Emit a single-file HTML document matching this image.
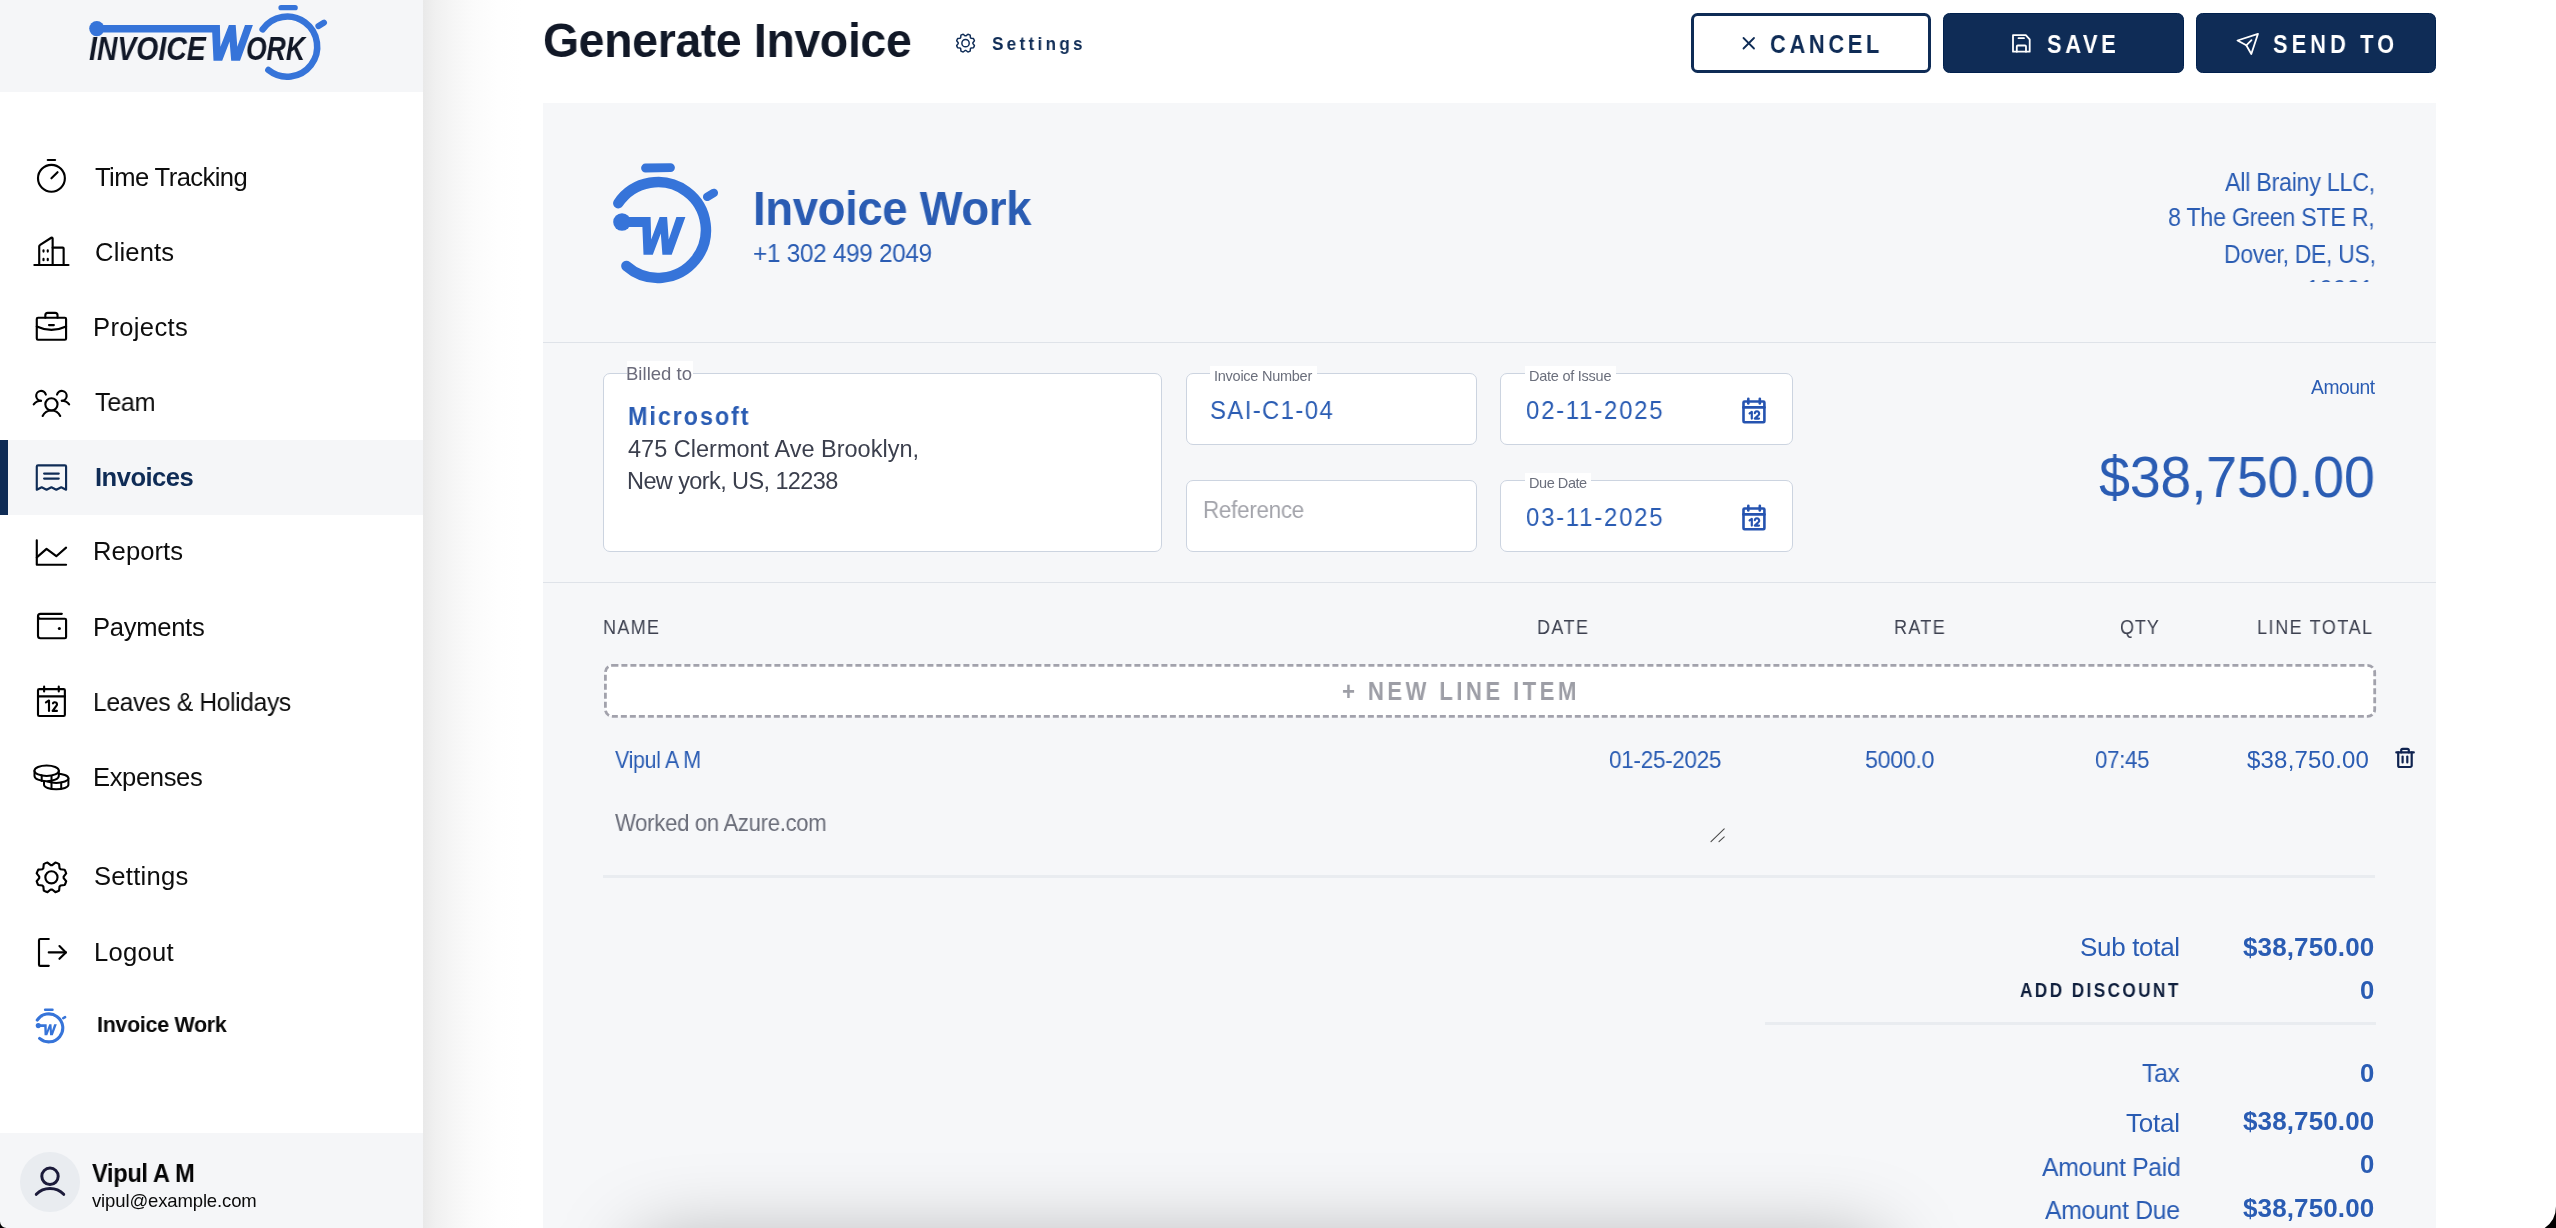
<!DOCTYPE html>
<html><head><meta charset="utf-8">
<style>
*{box-sizing:border-box;margin:0;padding:0}
html,body{width:2556px;height:1228px;overflow:hidden;background:#fff;font-family:"Liberation Sans",sans-serif}
.a{position:absolute}
.t{position:absolute;white-space:nowrap;will-change:transform}
.field{position:absolute;background:#fff;border:1.5px solid #ccd4e0;border-radius:7px}
.lbg{position:absolute;background:#fff}
</style></head>
<body>
<div id="root" style="position:relative;left:0;top:0;width:2556px;height:1228px;overflow:hidden;background:#fff">
<!-- sidebar -->
<div class="a" style="left:0;top:0;width:423px;height:92px;background:#f5f6f8"></div>
<svg class="a" style="left:0;top:0" width="423" height="92" viewBox="0 0 423 92">
 <circle cx="96.8" cy="28.6" r="7.6" fill="#3674d9"/>
 <path d="M96.8,25.06H219.9L220.4,46.8L228.9,25.06H235.7L237.3,46.8L245,25.06H252.9L240,60.8H231.2L229.6,41.5L222.2,60.8H213.5L212.2,32.5H96.8Z" fill="#3674d9"/>
 <path d="M262.65,29.4A30,30 0 1 1 268.4,70" fill="none" stroke="#3674d9" stroke-width="6.5" stroke-linecap="round"/>
 <line x1="281" y1="7.7" x2="295.2" y2="7.7" stroke="#3674d9" stroke-width="5.2" stroke-linecap="round"/>
 <line x1="318.4" y1="26.1" x2="324" y2="22.6" stroke="#3674d9" stroke-width="6" stroke-linecap="round"/>
</svg>
<div class="a" style="left:0;top:440px;width:423px;height:75px;background:#f5f6f8"></div>
<div class="a" style="left:0;top:440px;width:8px;height:75px;background:#0f2c56"></div>
<div class="a" style="left:0;top:1133px;width:423px;height:95px;background:#f5f6f8"></div>
<div class="a" style="left:20px;top:1152.4px;width:59.6px;height:59.6px;border-radius:50%;background:#e9ecf0"></div>
<div class="a" style="left:423px;top:0;width:100px;height:1228px;background:linear-gradient(90deg,#e9e9e9 0%,#f0f0f0 12%,#f6f6f6 30%,#fbfbfb 50%,#fefefe 75%,#ffffff 100%)"></div>

<svg class="a" style="left:0;top:0" width="423" height="1228" viewBox="0 0 423 1228">
 <g fill="none" stroke="#000" stroke-width="14" stroke-linecap="round" stroke-linejoin="round">
  <!-- timer -->
  <g transform="translate(31.9,157.6) scale(0.1526)">
   <circle cx="128" cy="136" r="88"/><line x1="128" y1="136" x2="168" y2="96"/><line x1="104" y1="16" x2="152" y2="16"/>
  </g>
  <!-- buildings -->
  <g transform="translate(31.9,233) scale(0.1526)">
   <line x1="16" y1="210" x2="240" y2="210"/>
   <path d="M136,210V36a6,6,0,0,0-9-5L54,78a10,10,0,0,0-6,9V210"/>
   <path d="M136,96H202a6,6,0,0,1,6,6V210"/>
   <line x1="76" y1="114" x2="76" y2="122"/><line x1="104" y1="114" x2="104" y2="122"/>
   <line x1="76" y1="170" x2="76" y2="178"/><line x1="104" y1="170" x2="104" y2="178"/>
  </g>
  <!-- briefcase -->
  <g transform="translate(31.9,308) scale(0.1526)">
   <rect x="32" y="64" width="192" height="144" rx="8"/>
   <path d="M88,64V48a16,16,0,0,1,16-16h48a16,16,0,0,1,16,16V64"/>
   <line x1="112" y1="112" x2="144" y2="112"/>
   <path d="M32,121Q128,166 224,121"/>
  </g>
  <!-- users three -->
  <g transform="translate(31.9,383) scale(0.1526)">
   <circle cx="128" cy="140" r="40"/>
   <path d="M196,116a59.8,59.8,0,0,1,48,24"/><path d="M12,140a59.8,59.8,0,0,1,48-24"/>
   <path d="M70.4,216a64.1,64.1,0,0,1,115.2,0"/>
   <path d="M60,116A32,32,0,1,1,91.1,76"/><path d="M164.9,76A32,32,0,1,1,196,116"/>
  </g>
  <!-- receipt -->
  <g transform="translate(31.9,458) scale(0.1526)" stroke="#0f2c56">
   <line x1="80" y1="102" x2="176" y2="102"/><line x1="80" y1="135" x2="176" y2="135"/>
   <path d="M32,208V56a8,8,0,0,1,8-8H216a8,8,0,0,1,8,8V208l-32-16-32,16-32-16L96,208,64,192Z"/>
  </g>
  <!-- chart -->
  <g transform="translate(31.9,533) scale(0.1526)">
   <polyline points="224 208 32 208 32 48"/><polyline points="224 96 160 152 96 104 32 160"/>
  </g>
  <!-- wallet -->
  <g transform="translate(31.9,606.5) scale(0.1526)">
   <path d="M40,64V192a16,16,0,0,0,16,16H216a8,8,0,0,0,8-8V88a8,8,0,0,0-8-8H56A16,16,0,0,1,40,64Z"/>
   <path d="M40,64A16,16,0,0,1,56,48H196"/>
   <circle cx="180" cy="144" r="10" fill="#000" stroke="none"/>
  </g>
  <!-- calendar -->
  <g transform="translate(31.9,683) scale(0.1526)">
   <rect x="40" y="40" width="176" height="176" rx="8"/>
   <line x1="176" y1="24" x2="176" y2="56"/><line x1="80" y1="24" x2="80" y2="56"/><line x1="40" y1="88" x2="216" y2="88"/>
   <path d="M92,126.94l20-12v68"/>
   <path d="M138.14,133.33A14,14,0,1,1,160,150.29L136,182.94h28"/>
  </g>
  <!-- coins -->
  <g stroke-width="2">
   <path d="M44,778.3V784.7A12.2,4.6 0 0 0 68.4,784.7V778.3" fill="#fff"/>
   <ellipse cx="56.2" cy="778.3" rx="12.2" ry="4.6" fill="#fff"/>
   <line x1="51.5" y1="783" x2="51.5" y2="789"/><line x1="61.2" y1="782.5" x2="61.2" y2="788.5"/>
   <path d="M34.5,770.7V776A12.15,5.2 0 0 0 58.8,776V770.7" fill="#fff"/>
   <ellipse cx="46.65" cy="770.7" rx="12.15" ry="5.2" fill="#fff"/>
   <line x1="41.7" y1="775.2" x2="41.7" y2="781"/><line x1="51.5" y1="775.9" x2="51.5" y2="781.3"/>
  </g>
  <!-- gear -->
  <g transform="translate(31.9,857.8) scale(0.1526)">
   <circle cx="128" cy="128" r="40"/>
   <path d="M41.43,178.09A99.14,99.14,0,0,1,31.36,153.8l16.78-21a81.59,81.59,0,0,1,0-9.64l-16.77-21a99.43,99.43,0,0,1,10.05-24.3l26.71-3a81,81,0,0,1,6.81-6.81l3-26.7A99.14,99.14,0,0,1,102.2,31.36l21,16.78a81.59,81.59,0,0,1,9.64,0l21-16.77a99.43,99.43,0,0,1,24.3,10.05l3,26.71a81,81,0,0,1,6.81,6.81l26.7,3a99.14,99.14,0,0,1,10.07,24.29l-16.78,21a81.59,81.59,0,0,1,0,9.640l16.77,21a99.43,99.43,0,0,1-10,24.3l-26.71,3a81,81,0,0,1-6.81,6.81l-3,26.7a99.14,99.14,0,0,1-24.3,10.07l-21-16.78a81.59,81.59,0,0,1-9.64,0l-21,16.77a99.43,99.43,0,0,1-24.3-10l-3-26.71a81,81,0,0,1-6.81-6.81Z"/>
  </g>
  <!-- sign out -->
  <g transform="translate(32.9,932.9) scale(0.1526)">
   <polyline points="174 86 216 128 174 170"/><line x1="104" y1="128" x2="216" y2="128"/>
   <path d="M104,216H48a8,8,0,0,1-8-8V48a8,8,0,0,1,8-8h56"/>
  </g>
 </g>
 <!-- avatar user -->
 <g fill="none" stroke="#1c1b3a" stroke-width="3" stroke-linecap="round">
  <circle cx="50" cy="1176.3" r="8.2"/>
  <path d="M36.3,1194.3A19,19 0 0 1 63.7,1194.3"/>
 </g>
 <!-- small logo -->
 <g transform="translate(48.8,1027.9) scale(0.292)">
  <use href="#logo"/>
 </g>
</svg>

<!-- main header icons -->
<svg class="a" style="left:0;top:0" width="2556" height="103" viewBox="0 0 2556 103">
 <g transform="translate(953.8,31.4) scale(0.0918)" fill="none" stroke="#0f2c56" stroke-width="16" stroke-linecap="round" stroke-linejoin="round">
   <circle cx="128" cy="128" r="40"/>
   <path d="M41.43,178.09A99.14,99.14,0,0,1,31.36,153.8l16.78-21a81.59,81.59,0,0,1,0-9.64l-16.77-21a99.43,99.43,0,0,1,10.05-24.3l26.71-3a81,81,0,0,1,6.81-6.81l3-26.7A99.14,99.14,0,0,1,102.2,31.36l21,16.78a81.59,81.59,0,0,1,9.64,0l21-16.77a99.43,99.43,0,0,1,24.3,10.05l3,26.71a81,81,0,0,1,6.81,6.81l26.7,3a99.14,99.14,0,0,1,10.07,24.290l-16.78,21a81.59,81.59,0,0,1,0,9.64l16.77,21a99.43,99.43,0,0,1-10,24.3l-26.71,3a81,81,0,0,1-6.81,6.81l-3,26.7a99.14,99.14,0,0,1-24.3,10.07l-21-16.78a81.59,81.59,0,0,1-9.64,0l-21,16.77a99.43,99.43,0,0,1-24.3-10l-3-26.71a81,81,0,0,1-6.81-6.81Z"/>
 </g>
 <rect x="1692.5" y="14.5" width="237" height="57" rx="5" fill="#fff" stroke="#0f2c56" stroke-width="3"/>
 <rect x="1943.5" y="13.5" width="240" height="59" rx="6" fill="#0f2c56" stroke="#00204d" stroke-width="1"/>
 <rect x="2196.5" y="13.5" width="239" height="59" rx="6" fill="#0f2c56" stroke="#00204d" stroke-width="1"/>
 <g stroke="#0f2c56" stroke-width="1.8" stroke-linecap="round"><line x1="1743.5" y1="38" x2="1754" y2="48.5"/><line x1="1754" y1="38" x2="1743.5" y2="48.5"/></g>
 <g fill="none" stroke="#fff" stroke-width="1.8" stroke-linejoin="round" stroke-linecap="round">
  <path d="M2013,35.2H2025.8L2029.7,39.4V51.7H2013Z"/>
  <line x1="2018.5" y1="38.2" x2="2024" y2="38.2"/>
  <path d="M2016.8,51.7V46.5a1,1,0,0,1,1-1H2025a1,1,0,0,1,1,1V51.7"/>
  <path d="M2237.5,40.5L2258,33.8L2251.3,54L2246.3,45.3Z"/>
  <line x1="2246.3" y1="45.3" x2="2251.5" y2="40.2"/>
 </g>
</svg>

<!-- card -->
<div class="a" style="left:543px;top:103px;width:1893px;height:1125px;background:#f6f7f9"></div>
<div class="a" style="left:543px;top:342px;width:1893px;height:1px;background:#dfe3e9"></div>
<div class="a" style="left:543px;top:582px;width:1893px;height:1px;background:#dfe3e9"></div>

<svg class="a" style="left:0;top:0" width="2556" height="1228" viewBox="0 0 2556 1228">
 <defs>
  <g id="logo">
   <path d="M-39.66,-26.86A47.9,47.9 0 1 1 -31.6,36" fill="none" stroke="#3674d9" stroke-width="10.5" stroke-linecap="round"/>
   <line x1="-12.5" y1="-62" x2="12.5" y2="-62.4" stroke="#3674d9" stroke-width="8.8" stroke-linecap="round"/>
   <line x1="49.2" y1="-33.2" x2="55.8" y2="-37.1" stroke="#3674d9" stroke-width="8.5" stroke-linecap="round"/>
   <circle cx="-36" cy="-8" r="8.8" fill="#3674d9"/>
   <path d="M-36,-12.9H-7.4L-6.8,9.6L1.6,-12.9H9.1L10.7,9.6L18.4,-12.9H27.4L13.7,24.8H4.4L2.8,3.6L-5.2,24.8H-14.5L-15.6,-3H-36Z" fill="#3674d9"/>
  </g>
 </defs>
 <g transform="translate(658,230)"><use href="#logo"/></g>
</svg>

<!-- fields -->
<div class="field" style="left:602.7px;top:372.6px;width:559.5px;height:179px"></div>
<div class="lbg" style="left:626.8px;top:361.2px;width:66.1px;height:14px;background:#fff"></div>
<div class="field" style="left:1185.7px;top:372.6px;width:291px;height:72.4px"></div>
<div class="lbg" style="left:1210px;top:365.5px;width:107px;height:10px"></div>
<div class="field" style="left:1500.4px;top:372.6px;width:292.5px;height:72.4px"></div>
<div class="lbg" style="left:1525px;top:365.5px;width:91px;height:10px"></div>
<div class="field" style="left:1185.7px;top:479.5px;width:291px;height:72.2px"></div>
<div class="field" style="left:1500.4px;top:479.5px;width:292.5px;height:72.2px"></div>
<div class="lbg" style="left:1525px;top:472.5px;width:66px;height:10px"></div>

<svg class="a" style="left:0;top:0" width="2556" height="1228" viewBox="0 0 2556 1228">
 <g id="cal" fill="none" stroke="#2553b0" stroke-width="2.6" stroke-linejoin="round" stroke-linecap="round">
  <rect x="1743.5" y="401.5" width="20.9" height="20.8" rx="1"/>
  <line x1="1748.3" y1="398.8" x2="1748.3" y2="403.5"/><line x1="1759.8" y1="398.8" x2="1759.8" y2="403.5"/>
  <line x1="1743.5" y1="407.4" x2="1764.4" y2="407.4"/>
  <path d="M1749.6,413.3L1751.8,411.8V418.6" stroke-width="2.2"/>
  <path d="M1754.8,413.2A2.2,2.2 0 1 1 1758.6,415L1754.8,418.6H1759" stroke-width="2.2"/>
 </g>
 <use href="#cal" transform="translate(0,107)"/>
 <!-- dashed new line box -->
 <rect x="605.4" y="665.4" width="1769.3" height="51" rx="7" fill="#fff" stroke="#a2a2ac" stroke-width="2.8" stroke-dasharray="6 3"/>
 <!-- trash -->
 <g fill="none" stroke="#0f2350" stroke-width="2.2" stroke-linecap="round" stroke-linejoin="round">
  <line x1="2396.3" y1="752.4" x2="2413.8" y2="752.4"/>
  <path d="M2401.2,752.4V750.3a1.5,1.5 0 0 1 1.5-1.5H2407.3a1.5,1.5 0 0 1 1.5,1.5V752.4"/>
  <path d="M2398.2,752.4V765.5a1.5,1.5 0 0 0 1.5,1.5H2410.2a1.5,1.5 0 0 0 1.5-1.5V752.4"/>
  <line x1="2402.6" y1="756.5" x2="2402.6" y2="762.5"/><line x1="2407.3" y1="756.5" x2="2407.3" y2="762.5"/>
 </g>
 <!-- resize -->
 <g stroke="#4a4a4a" stroke-width="1.1" stroke-linecap="round">
  <line x1="1711" y1="841.6" x2="1724.2" y2="828.8"/><line x1="1719" y1="841.6" x2="1724.2" y2="836.9"/>
 </g>
</svg>
<div class="a" style="left:603px;top:874.5px;width:1772px;height:3px;background:#e9ecf0"></div>
<div class="a" style="left:1765px;top:1021.5px;width:1611px;height:3px;background:#e9ecf0;width:611px"></div>

<!-- clipped address 4th line -->
<div class="a" style="left:2200px;top:270px;width:180px;height:12px;overflow:hidden">
 <div class="t" style="right:6.4px;top:6.4px;font-size:26px;line-height:26px;color:#2a5cb3;transform:scaleX(0.93);transform-origin:100% 0">19901</div>
</div>

<div class="t" style="left:89.40px;top:33.06px;font-size:32.3px;line-height:32.3px;font-weight:700;font-style:italic;color:#111827;letter-spacing:0.000px;transform:scaleX(0.8789);transform-origin:0 0;">INVOICE</div>
<div class="t" style="left:246.28px;top:33.06px;font-size:32.3px;line-height:32.3px;font-weight:700;font-style:italic;color:#111827;letter-spacing:0.000px;transform:scaleX(0.8224);transform-origin:0 0;">ORK</div>
<div class="t" style="left:95.10px;top:164.53px;font-size:25.6px;line-height:25.6px;font-weight:400;font-style:normal;color:#0d0d0d;letter-spacing:-0.591px;">Time Tracking</div>
<div class="t" style="left:94.70px;top:239.73px;font-size:25.6px;line-height:25.6px;font-weight:400;font-style:normal;color:#0d0d0d;letter-spacing:0.144px;">Clients</div>
<div class="t" style="left:93.10px;top:314.73px;font-size:25.6px;line-height:25.6px;font-weight:400;font-style:normal;color:#0d0d0d;letter-spacing:0.335px;">Projects</div>
<div class="t" style="left:95.10px;top:390.23px;font-size:25.6px;line-height:25.6px;font-weight:400;font-style:normal;color:#0d0d0d;letter-spacing:-0.350px;transform:scaleX(0.9832);transform-origin:0 0;">Team</div>
<div class="t" style="left:94.90px;top:465.03px;font-size:25.6px;line-height:25.6px;font-weight:700;font-style:normal;color:#0f2c56;letter-spacing:-0.527px;">Invoices</div>
<div class="t" style="left:93.10px;top:539.33px;font-size:25.6px;line-height:25.6px;font-weight:400;font-style:normal;color:#0d0d0d;letter-spacing:0.080px;">Reports</div>
<div class="t" style="left:93.10px;top:614.73px;font-size:25.6px;line-height:25.6px;font-weight:400;font-style:normal;color:#0d0d0d;letter-spacing:-0.300px;">Payments</div>
<div class="t" style="left:93.18px;top:690.23px;font-size:25.6px;line-height:25.6px;font-weight:400;font-style:normal;color:#0d0d0d;letter-spacing:-0.350px;transform:scaleX(0.9603);transform-origin:0 0;">Leaves &amp; Holidays</div>
<div class="t" style="left:93.10px;top:765.03px;font-size:25.6px;line-height:25.6px;font-weight:400;font-style:normal;color:#0d0d0d;letter-spacing:-0.386px;">Expenses</div>
<div class="t" style="left:94.10px;top:864.03px;font-size:25.6px;line-height:25.6px;font-weight:400;font-style:normal;color:#0d0d0d;letter-spacing:0.260px;">Settings</div>
<div class="t" style="left:93.60px;top:939.63px;font-size:25.6px;line-height:25.6px;font-weight:400;font-style:normal;color:#0d0d0d;letter-spacing:0.266px;">Logout</div>
<div class="t" style="left:97.34px;top:1013.55px;font-size:22.5px;line-height:22.5px;font-weight:700;font-style:normal;color:#0a0a0a;letter-spacing:-0.350px;transform:scaleX(0.9559);transform-origin:0 0;">Invoice Work</div>
<div class="t" style="left:92.10px;top:1161.04px;font-size:25px;line-height:25px;font-weight:700;font-style:normal;color:#050505;letter-spacing:-0.350px;transform:scaleX(0.9444);transform-origin:0 0;">Vipul A M</div>
<div class="t" style="left:92.10px;top:1191.94px;font-size:18.5px;line-height:18.5px;font-weight:400;font-style:normal;color:#0a0a0a;letter-spacing:-0.133px;">vipul@example.com</div>
<div class="t" style="left:542.84px;top:16.34px;font-size:48.5px;line-height:48.5px;font-weight:700;font-style:normal;color:#111827;letter-spacing:-0.350px;transform:scaleX(0.9561);transform-origin:0 0;">Generate Invoice</div>
<div class="t" style="left:992.00px;top:34.32px;font-size:19px;line-height:19px;font-weight:700;font-style:normal;color:#0f2c56;letter-spacing:3.659px;transform:scaleX(0.9000);transform-origin:0 0;">Settings</div>
<div class="t" style="left:1769.56px;top:30.69px;font-size:26px;line-height:26px;font-weight:700;font-style:normal;color:#0f2c56;letter-spacing:4.368px;transform:scaleX(0.8400);transform-origin:0 0;">CANCEL</div>
<div class="t" style="left:2047.30px;top:30.69px;font-size:26px;line-height:26px;font-weight:700;font-style:normal;color:#ffffff;letter-spacing:4.299px;transform:scaleX(0.8400);transform-origin:0 0;">SAVE</div>
<div class="t" style="left:2273.40px;top:30.69px;font-size:26px;line-height:26px;font-weight:700;font-style:normal;color:#ffffff;letter-spacing:4.843px;transform:scaleX(0.8400);transform-origin:0 0;">SEND TO</div>
<div class="t" style="left:752.96px;top:184.67px;font-size:48px;line-height:48px;font-weight:700;font-style:normal;color:#2a5cb3;letter-spacing:-0.350px;transform:scaleX(0.9471);transform-origin:0 0;">Invoice Work</div>
<div class="t" style="left:753.02px;top:241.04px;font-size:25px;line-height:25px;font-weight:400;font-style:normal;color:#2a5cb3;letter-spacing:-0.350px;transform:scaleX(0.9765);transform-origin:0 0;">+1 302 499 2049</div>
<div class="t" style="left:2225.40px;top:168.59px;font-size:26px;line-height:26px;font-weight:400;font-style:normal;color:#2a5cb3;letter-spacing:-0.350px;transform:scaleX(0.8991);transform-origin:0 0;">All Brainy LLC,</div>
<div class="t" style="left:2168.40px;top:204.39px;font-size:26px;line-height:26px;font-weight:400;font-style:normal;color:#2a5cb3;letter-spacing:-0.350px;transform:scaleX(0.8968);transform-origin:0 0;">8 The Green STE R,</div>
<div class="t" style="left:2223.63px;top:240.79px;font-size:26px;line-height:26px;font-weight:400;font-style:normal;color:#2a5cb3;letter-spacing:-0.350px;transform:scaleX(0.8848);transform-origin:0 0;">Dover, DE, US,</div>
<div class="t" style="left:626.30px;top:365.44px;font-size:18.5px;line-height:18.5px;font-weight:400;font-style:normal;color:#6b6b7b;letter-spacing:0.022px;">Billed to</div>
<div class="t" style="left:627.58px;top:403.90px;font-size:25.4px;line-height:25.4px;font-weight:700;font-style:normal;color:#2a5cb3;letter-spacing:2.093px;transform:scaleX(0.9200);transform-origin:0 0;">Microsoft</div>
<div class="t" style="left:628.00px;top:438.11px;font-size:23.5px;line-height:23.5px;font-weight:400;font-style:normal;color:#3b3f4d;letter-spacing:0.007px;">475 Clermont Ave Brooklyn,</div>
<div class="t" style="left:627.00px;top:469.71px;font-size:23.5px;line-height:23.5px;font-weight:400;font-style:normal;color:#3b3f4d;letter-spacing:-0.593px;">New york, US, 12238</div>
<div class="t" style="left:1213.60px;top:369.43px;font-size:14.5px;line-height:14.5px;font-weight:400;font-style:normal;color:#6b6f7c;letter-spacing:-0.255px;">Invoice Number</div>
<div class="t" style="left:1528.80px;top:369.43px;font-size:14.5px;line-height:14.5px;font-weight:400;font-style:normal;color:#6b6f7c;letter-spacing:-0.248px;">Date of Issue</div>
<div class="t" style="left:1528.80px;top:476.33px;font-size:14.5px;line-height:14.5px;font-weight:400;font-style:normal;color:#6b6f7c;letter-spacing:-0.442px;">Due Date</div>
<div class="t" style="left:1210.38px;top:396.59px;font-size:26px;line-height:26px;font-weight:400;font-style:normal;color:#2a5cb3;letter-spacing:1.505px;transform:scaleX(0.9200);transform-origin:0 0;">SAI-C1-04</div>
<div class="t" style="left:1525.88px;top:396.59px;font-size:26px;line-height:26px;font-weight:400;font-style:normal;color:#2a5cb3;letter-spacing:1.928px;transform:scaleX(0.9200);transform-origin:0 0;">02-11-2025</div>
<div class="t" style="left:1525.88px;top:503.69px;font-size:26px;line-height:26px;font-weight:400;font-style:normal;color:#2a5cb3;letter-spacing:1.928px;transform:scaleX(0.9200);transform-origin:0 0;">03-11-2025</div>
<div class="t" style="left:1203.34px;top:499.01px;font-size:23.5px;line-height:23.5px;font-weight:400;font-style:normal;color:#a3a4ab;letter-spacing:-0.350px;transform:scaleX(0.9584);transform-origin:0 0;">Reference</div>
<div class="t" style="left:2310.80px;top:377.66px;font-size:19.3px;line-height:19.3px;font-weight:400;font-style:normal;color:#2a5cb3;letter-spacing:-0.478px;">Amount</div>
<div class="t" style="left:2099.00px;top:449.33px;font-size:57.5px;line-height:57.5px;font-weight:400;font-style:normal;color:#2a5cb3;letter-spacing:-0.350px;transform:scaleX(0.9690);transform-origin:0 0;">$38,750.00</div>
<div class="t" style="left:603.40px;top:616.87px;font-size:20px;line-height:20px;font-weight:400;font-style:normal;color:#3d4150;letter-spacing:1.445px;transform:scaleX(0.9000);transform-origin:0 0;">NAME</div>
<div class="t" style="left:1536.50px;top:616.87px;font-size:20px;line-height:20px;font-weight:400;font-style:normal;color:#3d4150;letter-spacing:1.569px;transform:scaleX(0.9000);transform-origin:0 0;">DATE</div>
<div class="t" style="left:1893.60px;top:616.87px;font-size:20px;line-height:20px;font-weight:400;font-style:normal;color:#3d4150;letter-spacing:1.495px;transform:scaleX(0.9000);transform-origin:0 0;">RATE</div>
<div class="t" style="left:2119.70px;top:616.87px;font-size:20px;line-height:20px;font-weight:400;font-style:normal;color:#3d4150;letter-spacing:1.002px;transform:scaleX(0.9000);transform-origin:0 0;">QTY</div>
<div class="t" style="left:2257.10px;top:616.87px;font-size:20px;line-height:20px;font-weight:400;font-style:normal;color:#3d4150;letter-spacing:1.746px;transform:scaleX(0.9000);transform-origin:0 0;">LINE TOTAL</div>
<div class="t" style="left:1342.15px;top:678.39px;font-size:26px;line-height:26px;font-weight:700;font-style:normal;color:#9d9ea6;letter-spacing:4.054px;transform:scaleX(0.8500);transform-origin:0 0;">+ NEW LINE ITEM</div>
<div class="t" style="left:614.90px;top:747.68px;font-size:24px;line-height:24px;font-weight:400;font-style:normal;color:#2a5cb3;letter-spacing:-0.350px;transform:scaleX(0.8895);transform-origin:0 0;">Vipul A M</div>
<div class="t" style="left:1608.50px;top:747.68px;font-size:24px;line-height:24px;font-weight:400;font-style:normal;color:#2a5cb3;letter-spacing:-0.350px;transform:scaleX(0.9399);transform-origin:0 0;">01-25-2025</div>
<div class="t" style="left:1865.40px;top:747.68px;font-size:24px;line-height:24px;font-weight:400;font-style:normal;color:#2a5cb3;letter-spacing:-0.350px;transform:scaleX(0.9704);transform-origin:0 0;">5000.0</div>
<div class="t" style="left:2094.60px;top:747.68px;font-size:24px;line-height:24px;font-weight:400;font-style:normal;color:#2a5cb3;letter-spacing:-0.350px;transform:scaleX(0.9295);transform-origin:0 0;">07:45</div>
<div class="t" style="left:2246.80px;top:747.68px;font-size:24px;line-height:24px;font-weight:400;font-style:normal;color:#2a5cb3;letter-spacing:0.203px;">$38,750.00</div>
<div class="t" style="left:615.00px;top:810.98px;font-size:24px;line-height:24px;font-weight:400;font-style:normal;color:#6b6e7a;letter-spacing:-0.350px;transform:scaleX(0.9230);transform-origin:0 0;">Worked on Azure.com</div>
<div class="t" style="left:2079.90px;top:933.59px;font-size:26px;line-height:26px;font-weight:400;font-style:normal;color:#2a5cb3;letter-spacing:-0.319px;">Sub total</div>
<div class="t" style="left:2242.80px;top:933.59px;font-size:26px;line-height:26px;font-weight:700;font-style:normal;color:#2a5cb3;letter-spacing:0.126px;">$38,750.00</div>
<div class="t" style="left:2020.10px;top:981.31px;font-size:19.6px;line-height:19.6px;font-weight:700;font-style:normal;color:#0f1f3d;letter-spacing:2.694px;transform:scaleX(0.8800);transform-origin:0 0;">ADD DISCOUNT</div>
<div class="t" style="left:2359.60px;top:978.34px;font-size:25.7px;line-height:25.7px;font-weight:700;font-style:normal;color:#2a5cb3;letter-spacing:0.000px;">0</div>
<div class="t" style="left:2142.00px;top:1060.39px;font-size:26px;line-height:26px;font-weight:400;font-style:normal;color:#2a5cb3;letter-spacing:-0.350px;transform:scaleX(0.9507);transform-origin:0 0;">Tax</div>
<div class="t" style="left:2359.60px;top:1060.64px;font-size:25.7px;line-height:25.7px;font-weight:700;font-style:normal;color:#2a5cb3;letter-spacing:0.000px;">0</div>
<div class="t" style="left:2125.70px;top:1110.39px;font-size:26px;line-height:26px;font-weight:400;font-style:normal;color:#2a5cb3;letter-spacing:-0.211px;">Total</div>
<div class="t" style="left:2242.80px;top:1108.09px;font-size:26px;line-height:26px;font-weight:700;font-style:normal;color:#2a5cb3;letter-spacing:0.126px;">$38,750.00</div>
<div class="t" style="left:2041.70px;top:1153.69px;font-size:26px;line-height:26px;font-weight:400;font-style:normal;color:#2a5cb3;letter-spacing:-0.350px;transform:scaleX(0.9541);transform-origin:0 0;">Amount Paid</div>
<div class="t" style="left:2359.60px;top:1151.74px;font-size:25.7px;line-height:25.7px;font-weight:700;font-style:normal;color:#2a5cb3;letter-spacing:0.000px;">0</div>
<div class="t" style="left:2044.50px;top:1197.19px;font-size:26px;line-height:26px;font-weight:400;font-style:normal;color:#2a5cb3;letter-spacing:-0.350px;transform:scaleX(0.9545);transform-origin:0 0;">Amount Due</div>
<div class="t" style="left:2242.80px;top:1194.89px;font-size:26px;line-height:26px;font-weight:700;font-style:normal;color:#2a5cb3;letter-spacing:0.126px;">$38,750.00</div>

<!-- bottom shadow -->
<div class="a" style="left:635px;top:1240px;width:1250px;height:120px;border-radius:30px;background:rgba(0,0,0,0.29);filter:blur(40px)"></div>
<!-- window corners -->
<svg class="a" style="left:0;top:1200px" width="30" height="28"><path d="M0,21.5A6.6,6.6 0 0 0 6.8,28H0Z" fill="#000"/></svg>
<svg class="a" style="left:2526px;top:1200px" width="30" height="28"><path d="M30,6.2A26.7,26.7 0 0 1 18.7,28H30Z" fill="#000"/></svg>
</div>
</body></html>
